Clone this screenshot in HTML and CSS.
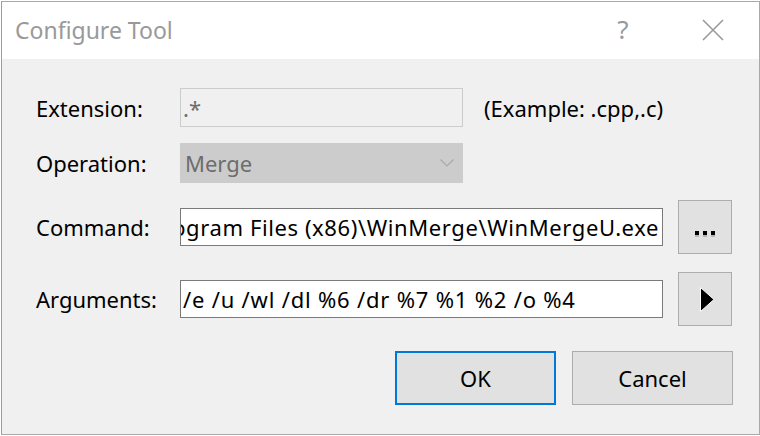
FILE: index.html
```html
<!DOCTYPE html>
<html>
<head>
<meta charset="utf-8">
<title>Configure Tool</title>
<link rel="stylesheet" href="styles.css">
</head>
<body>
<div class="screen">
  <div class="dialog">
    <div class="titlebar">
      <span class="title">Configure Tool</span>
      <span class="help">?</span>
      <span class="close">
        <svg width="22" height="22" viewBox="0 0 22 22"><path d="M1 1 L21 21 M21 1 L1 21" stroke="#9a9a9a" stroke-width="1.6" fill="none"/></svg>
      </span>
    </div>
    <div class="content">
      <div class="row r1">
        <span class="lbl">Extension:</span>
        <div class="field disabled"><span>.*</span></div>
        <span class="example">(Example: .cpp,.c)</span>
      </div>
      <div class="row r2">
        <span class="lbl">Operation:</span>
        <div class="combo">
          <span>Merge</span>
          <svg class="chev" width="14" height="8" viewBox="0 0 14 8"><path d="M0.5 0.5 L7 7 L13.5 0.5" stroke="#a8a8a8" stroke-width="1.2" fill="none"/></svg>
        </div>
      </div>
      <div class="row r3">
        <span class="lbl">Command:</span>
        <div class="field input scroll"><span class="val">C:\Program Files (x86)\WinMerge\WinMergeU.exe</span></div>
        <button class="small dots"><span class="dot"></span><span class="dot"></span><span class="dot"></span></button>
      </div>
      <div class="row r4">
        <span class="lbl">Arguments:</span>
        <div class="field input"><span class="val">/e /u /wl /dl %6 /dr %7 %1 %2 /o %4</span></div>
        <button class="small play">
          <svg width="17" height="27" viewBox="0 0 17 27"><polygon points="1.5,1.5 15,13.5 1.5,25.5" fill="#000" stroke="#fff" stroke-width="1"/></svg>
        </button>
      </div>
      <div class="actions">
        <button class="btn default">OK</button>
        <button class="btn">Cancel</button>
      </div>
    </div>
  </div>
</div>
</body>
</html>
```
FILE: styles.css
```css
html, body {
  margin: 0;
  padding: 0;
  background: #ffffff;
  width: 760px;
  height: 436px;
  overflow: hidden;
}

.screen {
  padding: 1px 0 0 1px;
  height: 436px;
  box-sizing: border-box;
}

.dialog {
  width: 759px;
  height: 434px;
  box-sizing: border-box;
  border: 1px solid #a9a9a9;
  border-left-color: #9c9c9c;
  background: #f0f0f0;
  display: flex;
  flex-direction: column;
  font-family: "Noto Sans", "Open Sans", sans-serif;
  font-size: 22px;
  color: #000;
}

.titlebar {
  height: 57px;
  flex: none;
  background: #ffffff;
  display: flex;
  align-items: center;
}

.title {
  padding-left: 13px;
  font-size: 23px;
  color: #999999;
  margin-top: -2px;
}

.help {
  margin-left: auto;
  width: 46px;
  text-align: center;
  font-size: 26px;
  color: #999999;
  margin-top: -3px;
}

.close {
  width: 46px;
  margin-left: 44px;
  margin-right: 23px;
  display: flex;
  justify-content: center;
  align-items: center;
  margin-top: -2px;
}

.close svg {
  display: block;
}

.content {
  flex: 1;
  padding: 29px 26px 0 34px;
}

.row {
  display: flex;
  align-items: center;
}

.lbl {
  width: 144px;
  flex: none;
}

.r1 { height: 39px; }
.r2 { height: 40px; margin-top: 16px; }
.r3 { height: 54px; margin-top: 17px; }
.r4 { height: 54px; margin-top: 18px; }

.field {
  box-sizing: border-box;
  display: flex;
  align-items: center;
  overflow: hidden;
  white-space: nowrap;
  flex: none;
}

.field.disabled {
  width: 283px;
  height: 39px;
  border: 1px solid #cccccc;
  background: #f0f0f0;
  color: #6d6d6d;
  padding-left: 2px;
}

.field.input {
  width: 483px;
  height: 38px;
  border: 1px solid #7a7a7a;
  background: #ffffff;
  padding-left: 2px;
}

.field .val {
  letter-spacing: 0.8px;
}

.field.scroll {
  justify-content: flex-end;
  padding-right: 3px;
}

.field.scroll .val {
  flex: none;
  letter-spacing: 0.6px;
}

.example {
  margin-left: 21px;
}

.combo {
  width: 283px;
  height: 40px;
  box-sizing: border-box;
  background: #cccccc;
  border: 1px solid #cccccc;
  display: flex;
  align-items: center;
  padding-left: 4px;
  color: #6d6d6d;
  flex: none;
}

.chev {
  margin-left: auto;
  margin-right: 8px;
  display: block;
}

button {
  font: inherit;
  color: #000;
  padding: 0;
  margin: 0;
  background: #e1e1e1;
  border: 1px solid #adadad;
  box-sizing: border-box;
}

.small {
  width: 54px;
  height: 54px;
  margin-left: 15px;
  flex: none;
  display: flex;
  align-items: center;
  justify-content: center;
}

.dots {
  gap: 4px;
  padding-top: 12px;
}

.dot {
  width: 4px;
  height: 4px;
  background: #000;
  box-shadow: 0 2px 0 #b4b4b4;
}

.play {
  padding-left: 5px;
}

.play svg {
  display: block;
}

.actions {
  display: flex;
  justify-content: flex-end;
  gap: 16px;
  margin-top: 25px;
}

.btn {
  width: 161px;
  height: 54px;
}

.btn.default {
  border: 2px solid #0078d7;
}
```
